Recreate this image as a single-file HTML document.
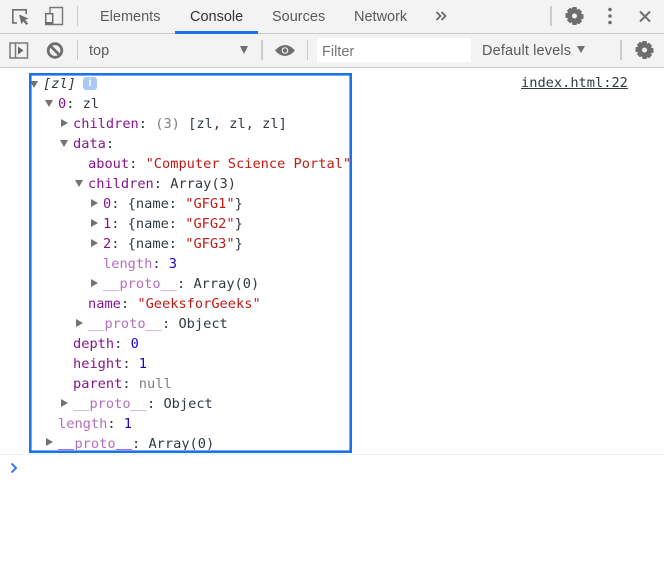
<!DOCTYPE html>
<html><head><meta charset="utf-8">
<style>
html,body{margin:0;padding:0;width:664px;height:571px;overflow:hidden;background:#fff}
.a{position:absolute}
.ui{position:absolute;font-family:"Liberation Sans",sans-serif;font-size:14.5px;color:#5a5a5a;line-height:20px;white-space:nowrap}
.l{position:absolute;margin-top:1px;font-family:"DejaVu Sans Mono",monospace;font-size:13.67px;line-height:20px;height:20px;color:#303942;white-space:pre}
.k{color:#881391}.f{color:#b46ec0}.s{color:#c41a16}.n{color:#1c00cf}.g{color:#808080}
.r{position:absolute;width:0;height:0;border-left:7px solid #727272;border-top:4.500px solid transparent;border-bottom:4.500px solid transparent}
.d{position:absolute;margin-top:1px;width:0;height:0;border-top:7px solid #727272;border-left:4.500px solid transparent;border-right:4.500px solid transparent}
.sep{position:absolute;width:1px;background:#ccc}
</style></head><body>
<div class="a" style="left:0;top:0;width:664px;height:68px;background:#f3f3f3"></div>
<div class="a" style="left:0;top:33px;width:664px;height:1px;background:#ccc"></div>
<div class="a" style="left:0;top:67px;width:664px;height:1px;background:#ccc"></div>
<div class="sep" style="left:77px;top:6px;height:20px"></div>
<div class="sep" style="left:550px;top:6px;height:20px;width:2px;background:#ccc"></div>
<div class="sep" style="left:77px;top:40px;height:20px"></div>
<div class="sep" style="left:261px;top:40px;height:20px;width:2px;background:#ccc"></div>
<div class="sep" style="left:307px;top:40px;height:20px"></div>
<div class="sep" style="left:620px;top:40px;height:20px;width:2px;background:#ccc"></div>
<svg class="a" style="left:0;top:0" width="664" height="68" fill="none">
<path d="M17 23h-4.200V9.800h13.400v4.200" stroke="#6e6e6e" stroke-width="1.600"/>
<path d="M19 14.500l9.500 4-3.300 1.500 3 3.500-1.800 1.500-3-3.500-2 2.500z" fill="#6e6e6e"/>
<path d="M50 13V7.500h12.500v17H53" stroke="#777" stroke-width="1.400"/>
<rect x="45.700" y="13.700" width="7" height="10.800" stroke="#6e6e6e" stroke-width="1.500"/>
<rect x="45" y="22" width="8" height="3" fill="#6e6e6e"/>
<rect x="10" y="43" width="17.500" height="15" stroke="#7a7a7a" stroke-width="1.500"/>
<path d="M15.500 43v15" stroke="#7a7a7a" stroke-width="1.500"/>
<path d="M18 46.500l5.500 4-5.500 4z" fill="#666"/>
<circle cx="55" cy="50.500" r="6.800" stroke="#6e6e6e" stroke-width="2.800"/>
<path d="M50 45.500l10 10" stroke="#6e6e6e" stroke-width="2.800"/>
<path d="M275 50.500q10-11 20 0q-10 11-20 0z" fill="#6e6e6e"/>
<circle cx="285" cy="50.500" r="3.300" fill="#f3f3f3"/>
<circle cx="285" cy="50.500" r="2.200" fill="#6e6e6e"/>
<path d="M436.500 12l4 4-4 4M441.500 12l4 4-4 4" stroke="#666" stroke-width="1.700"/>
<g transform="translate(574.500 16)"><path d="M-2-9h4l.6 2.700 2-.9 2.900 2.900-1 2 2.500.6v4.400l-2.500.6 1 2-2.900 2.900-2-1L2 9h-4l-.6-2.800-2 1-2.900-2.900 1-2-2.500-.6v-4.400l2.500-.6-1-2 2.900-2.900 2 .9z" fill="#6e6e6e"/><circle r="2.500" fill="#f3f3f3"/></g>
<g transform="translate(644.500 50)"><path d="M-2-9h4l.6 2.700 2-.9 2.900 2.900-1 2 2.500.6v4.400l-2.500.6 1 2-2.900 2.900-2-1L2 9h-4l-.6-2.800-2 1-2.900-2.900 1-2-2.500-.6v-4.400l2.500-.6-1-2 2.900-2.900 2 .9z" fill="#6e6e6e"/><circle r="2.500" fill="#f3f3f3"/></g>
<circle cx="610" cy="9.500" r="1.800" fill="#6e6e6e"/><circle cx="610" cy="16" r="1.800" fill="#6e6e6e"/><circle cx="610" cy="22.500" r="1.800" fill="#6e6e6e"/>
<path d="M640 11.500l10 10M650 11.500l-10 10" stroke="#6e6e6e" stroke-width="2"/>
</svg>
<div class="ui" style="left:100px;top:7px">Elements</div>
<div class="ui" style="left:190px;top:7px;color:#333">Console</div>
<div class="a" style="left:175px;top:31px;width:83px;height:3px;background:#1a73e8"></div>
<div class="ui" style="left:272px;top:7px">Sources</div>
<div class="ui" style="left:354px;top:7px">Network</div>
<div class="ui" style="left:89px;top:41px">top</div>
<div class="a" style="left:240px;top:46px;width:0;height:0;border-top:8px solid #6e6e6e;border-left:4.500px solid transparent;border-right:4.500px solid transparent"></div>
<div class="a" style="left:317px;top:38px;width:154px;height:24px;background:#fff"></div>
<div class="ui" style="left:322px;top:42px;color:#757575">Filter</div>
<div class="ui" style="left:482px;top:41px;letter-spacing:.15px">Default levels</div>
<div class="a" style="left:577px;top:46px;width:0;height:0;border-top:7px solid #6e6e6e;border-left:4px solid transparent;border-right:4px solid transparent"></div>

<div class="l" style="left:521px;top:72px;text-decoration:underline">index.html:22</div>

<div class="d" style="left:30px;top:80px"></div>
<div class="l" style="left:43px;top:73px;font-style:italic">[zl]</div>
<div class="a" style="left:83px;top:77px;width:14px;height:13px;background:#a9c7f7;border-radius:3px;color:#fff;font:bold 11px/13px 'Liberation Sans',sans-serif;text-align:center">i</div>

<div class="d" style="left:45px;top:99px"></div>
<div class="l" style="left:58px;top:93px"><span class="k">0</span>: zl</div>

<div class="r" style="left:61px;top:119px"></div>
<div class="l" style="left:73px;top:113px"><span class="k">children</span>: <span class="g">(3)</span> [zl, zl, zl]</div>

<div class="d" style="left:60px;top:139px"></div>
<div class="l" style="left:73px;top:133px"><span class="k">data</span>:</div>

<div class="l" style="left:88px;top:153px;width:262px;overflow:hidden"><span class="k">about</span>: <span class="s">"Computer Science Portal"</span></div>

<div class="d" style="left:75px;top:179px"></div>
<div class="l" style="left:88px;top:173px"><span class="k">children</span>: Array(3)</div>

<div class="r" style="left:91px;top:199px"></div>
<div class="l" style="left:103px;top:193px"><span class="k">0</span>: {name: <span class="s">"GFG1"</span>}</div>
<div class="r" style="left:91px;top:219px"></div>
<div class="l" style="left:103px;top:213px"><span class="k">1</span>: {name: <span class="s">"GFG2"</span>}</div>
<div class="r" style="left:91px;top:239px"></div>
<div class="l" style="left:103px;top:233px"><span class="k">2</span>: {name: <span class="s">"GFG3"</span>}</div>
<div class="l" style="left:103px;top:253px"><span class="f">length</span>: <span class="n">3</span></div>
<div class="r" style="left:91px;top:279px"></div>
<div class="l" style="left:103px;top:273px"><span class="f">__proto__</span>: Array(0)</div>
<div class="l" style="left:88px;top:293px"><span class="k">name</span>: <span class="s">"GeeksforGeeks"</span></div>
<div class="r" style="left:76px;top:319px"></div>
<div class="l" style="left:88px;top:313px"><span class="f">__proto__</span>: Object</div>
<div class="l" style="left:73px;top:333px"><span class="k">depth</span>: <span class="n">0</span></div>
<div class="l" style="left:73px;top:353px"><span class="k">height</span>: <span class="n">1</span></div>
<div class="l" style="left:73px;top:373px"><span class="k">parent</span>: <span class="g">null</span></div>
<div class="r" style="left:61px;top:399px"></div>
<div class="l" style="left:73px;top:393px"><span class="f">__proto__</span>: Object</div>
<div class="l" style="left:58px;top:413px"><span class="f">length</span>: <span class="n">1</span></div>
<div class="r" style="left:46px;top:438px"></div>
<div class="l" style="left:58px;top:433px;height:20px"><span class="f">__proto__</span>: Array(0)</div>
<div class="a" style="left:31px;top:450px;width:320px;height:4px;background:#fff"></div>
<div class="a" style="left:58px;top:449px;width:16px;height:1px;background:#b46ec0"></div>
<div class="a" style="left:116px;top:449px;width:16px;height:1px;background:#b46ec0"></div>

<svg class="a" style="left:0;top:0" width="664" height="571" fill="none"><rect x="30.300" y="74.300" width="320.400" height="377.400" stroke="#1a73e8" stroke-width="2.600"/></svg>

<div class="a" style="left:0;top:454px;width:664px;height:1px;background:#f0f0f0"></div>
<svg class="a" style="left:9px;top:462px" width="10" height="12" fill="none"><path d="M2.500 1.500l4.500 4.500-4.500 4.500" stroke="#367cf1" stroke-width="2"/></svg>
</body></html>
